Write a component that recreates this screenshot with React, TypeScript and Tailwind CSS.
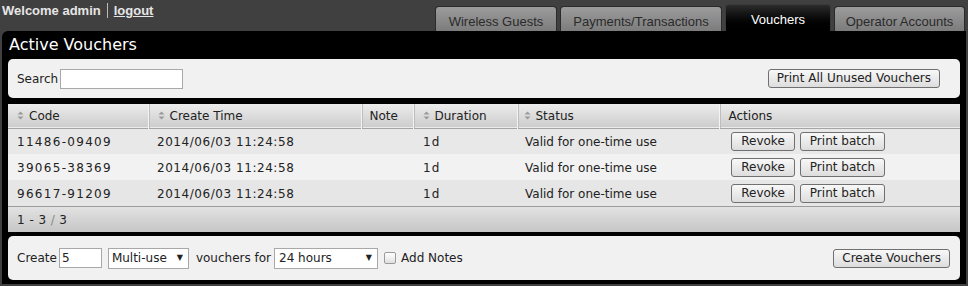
import { ReactNode } from 'react';

const SortIcon = () => (
  <svg width="7" height="9" viewBox="0 0 7 9" className="inline-block mr-[5px] align-[0px]">
    <path d="M3.5 0.5 L6.5 3.5 L0.5 3.5 Z" fill="#9a9a9a" />
    <path d="M3.5 8.5 L6.5 5.5 L0.5 5.5 Z" fill="#9a9a9a" />
  </svg>
);

const Btn = ({ children, className = '' }: { children: ReactNode; className?: string }) => (
  <button
    type="button"
    className={`h-[19px] px-[8px] whitespace-nowrap rounded-[3px] border border-[#707070] bg-gradient-to-b from-[#f8f8f8] to-[#dddddd] text-[12px] leading-[17px] text-[#222] ${className}`}
  >
    {children}
  </button>
);

const Tab = ({ label, active = false, w }: { label: string; active?: boolean; w: string }) => (
  <div
    className={
      active
        ? `${w} h-[27px] rounded-t-[4px] border border-b-0 border-[#3a3a3a] bg-gradient-to-b from-[#2c2c2c] to-[#000] text-white text-[13px] text-center pt-[5px] font-['Liberation_Sans',sans-serif]`
        : `${w} h-[25px] rounded-t-[4px] border border-b-0 border-[#2a2a2a] bg-gradient-to-b from-[#9c9c9c] to-[#7c7c7c] text-[#2a2a2a] text-[13px] text-center pt-[5px] font-['Liberation_Sans',sans-serif]`
    }
  >
    {label}
  </div>
);

const vouchers = [
  { code: '11486-09409', bg: 'bg-[#e8e8e8]' },
  { code: '39065-38369', bg: 'bg-[#f2f2f2]' },
  { code: '96617-91209', bg: 'bg-[#e6e6e6]' },
];

export default function App() {
  return (
    <div className="w-[968px] h-[286px] bg-[#404040] overflow-hidden font-['DejaVu_Sans',sans-serif] text-[12px] text-[#222]">
      <div className="flex justify-between items-end h-[31px]">
        <div className="self-start flex items-center pl-[2px] pt-[1px] text-[13px] font-bold text-[#e6e6e6] font-['Liberation_Sans',sans-serif]">
          <span>Welcome admin</span>
          <span className="mx-[6px] w-px h-[15px] bg-[#bbb]" />
          <span className="underline">logout</span>
        </div>
        <div className="flex items-end gap-[3px] pr-[3px]">
          <Tab label="Wireless Guests" w="w-[122px]" />
          <Tab label="Payments/Transactions" w="w-[162px]" />
          <Tab label="Vouchers" w="w-[106px]" active />
          <Tab label="Operator Accounts" w="w-[131px]" />
        </div>
      </div>

      <div className="mx-[2px] bg-black rounded-tl-[6px] px-[6px] pb-[4px]">
        <h1 className="h-[28px] pl-[1px] pt-[4px] text-[16px] leading-[20px] text-white">Active Vouchers</h1>

        <div className="flex items-center justify-between h-[39px] rounded-[5px] bg-[#f1f1f1] pl-[9px] pr-[20px]">
          <div className="flex items-center gap-[2px]">
            <span>Search</span>
            <input className="w-[123px] h-[20px] border border-[#a8a8a8] bg-white" />
          </div>
          <Btn>Print All Unused Vouchers</Btn>
        </div>

        <table className="mt-[6px] w-[952px] table-fixed border-collapse">
          <colgroup>
            <col className="w-[140px]" />
            <col className="w-[213px]" />
            <col className="w-[52px]" />
            <col className="w-[104px]" />
            <col className="w-[202px]" />
            <col className="w-[241px]" />
          </colgroup>
          <thead>
            <tr className="h-[24px] bg-gradient-to-b from-[#ececec] to-[#cdcdcd] border-b border-[#a5a5a5] text-left">
              <th className="font-normal pl-[9px]"><SortIcon />Code</th>
              <th className="font-normal pl-[9px] border-l border-[#f4f4f4] shadow-[inset_1px_0_0_#bdbdbd]"><SortIcon />Create Time</th>
              <th className="font-normal pl-[8px] border-l border-[#f4f4f4] shadow-[inset_1px_0_0_#bdbdbd]">Note</th>
              <th className="font-normal pl-[9px] border-l border-[#f4f4f4] shadow-[inset_1px_0_0_#bdbdbd]"><SortIcon />Duration</th>
              <th className="font-normal pl-[6px] border-l border-[#f4f4f4] shadow-[inset_1px_0_0_#bdbdbd]"><SortIcon />Status</th>
              <th className="font-normal pl-[9px] border-l border-[#f4f4f4] shadow-[inset_1px_0_0_#bdbdbd]">Actions</th>
            </tr>
          </thead>
          <tbody>
            {vouchers.map((v) => (
              <tr key={v.code} className={`h-[26px] ${v.bg}`}>
                <td className="pl-[9px] pt-[1px] tracking-[1.3px]">{v.code}</td>
                <td className="pl-[9px] pt-[1px] tracking-[0.55px]">2014/06/03 11:24:58</td>
                <td />
                <td className="pl-[10px] pt-[1px] tracking-[1px]">1d</td>
                <td className="pl-[8px] pt-[1px]">Valid for one-time use</td>
                <td className="pl-[12px]">
                  <div className="flex gap-[5px]">
                    <Btn className="w-[64px] px-0">Revoke</Btn>
                    <Btn className="w-[85px] px-0">Print batch</Btn>
                  </div>
                </td>
              </tr>
            ))}
          </tbody>
        </table>
        <div className="h-[26px] flex items-center pl-[9px] border-t border-[#9c9c9c] bg-gradient-to-b from-[#e2e2e2] to-[#c6c6c6] tracking-[0.5px]">
          1 - 3 <span className="mx-[4px] text-[#888]">/</span> 3
        </div>

        <div className="mt-[4px] flex items-center justify-between h-[44px] rounded-[5px] bg-[#f1f1f1] pl-[9px] pr-[10px]">
          <div className="flex items-center">
            <span>Create</span>
            <input defaultValue="5" className="ml-[2px] w-[43px] h-[20px] border border-[#a8a8a8] bg-white pl-[2px]" />
            <div className="ml-[6px] w-[81px] h-[21px] border border-[#a8a8a8] bg-white flex items-center justify-between pl-[3px] pr-[5px]">
              <span>Multi-use</span>
              <span className="text-[8px]">▼</span>
            </div>
            <span className="ml-[7px]">vouchers for</span>
            <div className="ml-[3px] w-[104px] h-[21px] border border-[#a8a8a8] bg-white flex items-center justify-between pl-[4px] pr-[5px]">
              <span>24 hours</span>
              <span className="text-[8px]">▼</span>
            </div>
            <span className="ml-[6px] w-[12px] h-[12px] border border-[#9a9a9a] rounded-[2px] bg-gradient-to-b from-[#fff] to-[#e0e0e0]" />
            <span className="ml-[5px]">Add Notes</span>
          </div>
          <Btn>Create Vouchers</Btn>
        </div>
      </div>
    </div>
  );
}
